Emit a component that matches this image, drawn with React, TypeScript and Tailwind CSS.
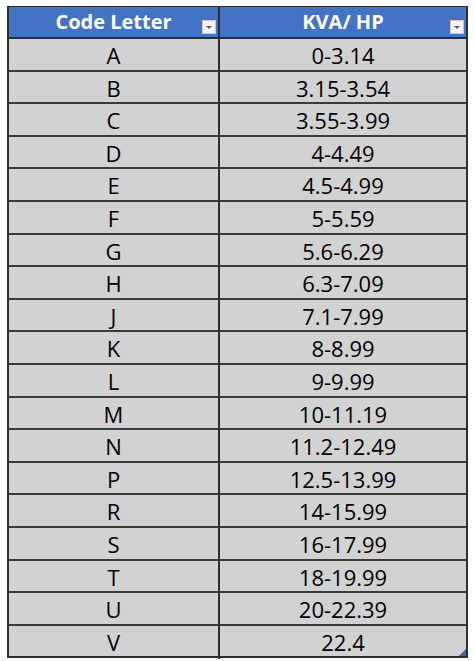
const rows: [string, string][] = [
  ["A", "0-3.14"],
  ["B", "3.15-3.54"],
  ["C", "3.55-3.99"],
  ["D", "4-4.49"],
  ["E", "4.5-4.99"],
  ["F", "5-5.59"],
  ["G", "5.6-6.29"],
  ["H", "6.3-7.09"],
  ["J", "7.1-7.99"],
  ["K", "8-8.99"],
  ["L", "9-9.99"],
  ["M", "10-11.19"],
  ["N", "11.2-12.49"],
  ["P", "12.5-13.99"],
  ["R", "14-15.99"],
  ["S", "16-17.99"],
  ["T", "18-19.99"],
  ["U", "20-22.39"],
  ["V", "22.4"],
];

const FilterButton = () => (
  <div className="absolute right-[2px] bottom-[3px] w-[14px] h-[14px] bg-[#f4f4f4] border border-[#c8c8c8] flex items-center justify-center">
    <svg width="8" height="5" viewBox="0 0 8 5">
      <path d="M1 1 L7 1 L4 4 Z" fill="#5a5a5a" />
    </svg>
  </div>
);

export default function App() {
  return (
    <div
      className="w-[474px] h-[661px] bg-white pt-[6px] pl-[7px]"
      style={{ fontFamily: '"Open Sans", "Liberation Sans", sans-serif' }}
    >
      <div className="relative w-[461px] border-l-2 border-r-2 border-b-2 border-t border-[#2e2e2e]">
        <div className="grid grid-cols-[211px_1fr] h-[32px] bg-[#4472c4] border-b-2 border-[#2e2e2e]">
          <div className="relative flex items-center justify-center border-r-2 border-[#2e2e2e] text-white font-bold text-[20px]">
            Code Letter
            <FilterButton />
          </div>
          <div className="relative flex items-center justify-center text-white font-bold text-[20px]">
            KVA/ HP
            <FilterButton />
          </div>
        </div>
        {rows.map(([code, kva], i) => (
          <div
            key={code}
            className={
              i < rows.length - 1
                ? "grid grid-cols-[211px_1fr] h-[32.6px] bg-[#d3d2d2] border-b-2 border-[#3a3a3a]"
                : "grid grid-cols-[211px_1fr] h-[30.6px] bg-[#d3d2d2]"
            }
          >
            <div className="flex items-center justify-center border-r-2 border-[#2e2e2e] text-[22px] text-black">
              {code}
            </div>
            <div className="flex items-center justify-center text-[22px] text-black">
              {kva}
            </div>
          </div>
        ))}
        <svg className="absolute right-0 bottom-0" width="7" height="7" viewBox="0 0 7 7">
          <path d="M7 0 L7 7 L0 7 Z" fill="#3a5fb0" />
        </svg>
      </div>
    </div>
  );
}
